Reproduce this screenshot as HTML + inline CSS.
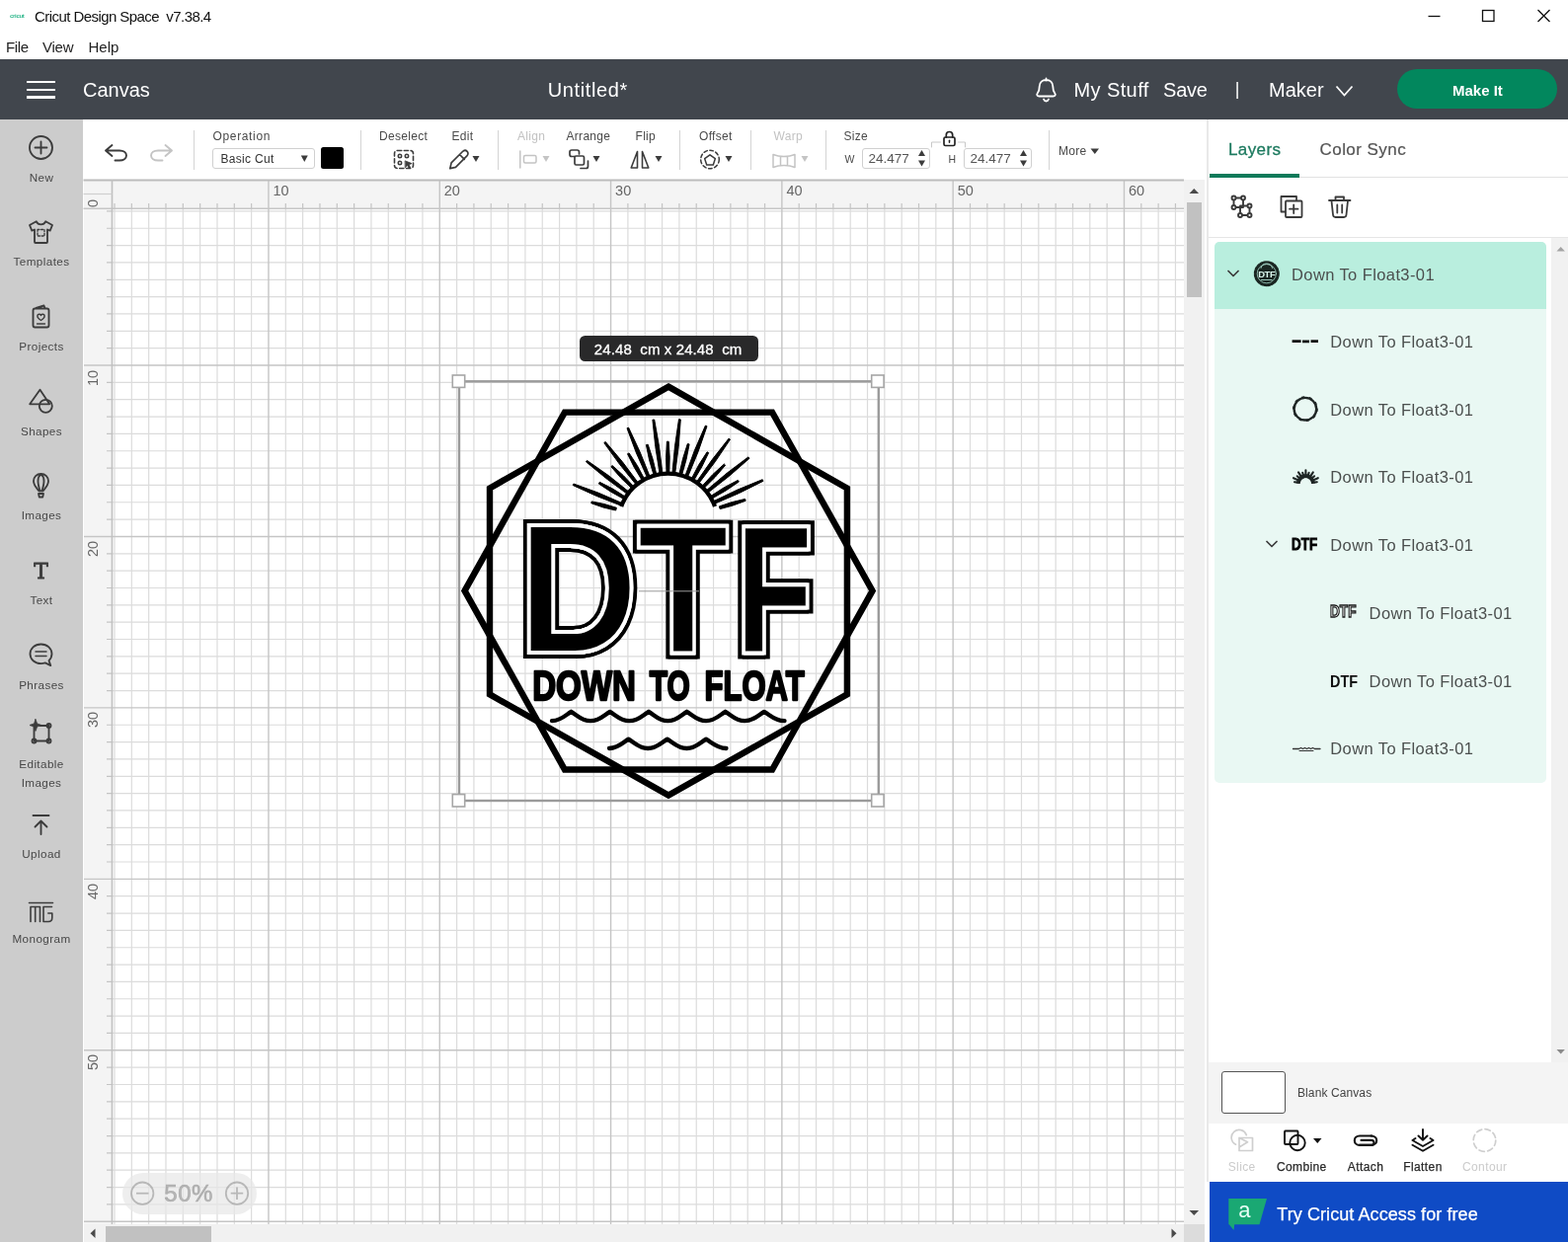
<!DOCTYPE html>
<html lang="en"><head><meta charset="utf-8"><title>Cricut Design Space</title>
<style>
*{box-sizing:border-box;margin:0;padding:0}
html,body{width:1588px;height:1258px;overflow:hidden;background:#fff}
body{position:relative;font-family:"Liberation Sans",sans-serif;color:#333}
.a{position:absolute}
.t{position:absolute;white-space:nowrap;line-height:1}
svg{position:absolute;overflow:visible}
#app{position:absolute;left:0;top:0;width:1588px;height:1258px;overflow:hidden;will-change:transform}

</style></head>
<body>
<div id="app">
<!-- titlebar -->

<div class="a" style="left:0;top:0;width:1588px;height:60px;background:#fff"></div>
<div class="t" style="left:10px;top:13px;font-size:6px;font-weight:bold;color:#2bb68a;letter-spacing:-0.3px">cricut</div>
<div class="t" style="left:35px;top:9px;font-size:15px;letter-spacing:-.56px;color:#111">Cricut Design Space&nbsp; v7.38.4</div>
<div class="t" style="left:6px;top:39.800px;font-size:15px;letter-spacing:-.4px;color:#222">File</div>
<div class="t" style="left:43px;top:39.800px;font-size:15px;letter-spacing:-.25px;color:#222">View</div>
<div class="t" style="left:89.500px;top:39.800px;font-size:15px;color:#222">Help</div>
<svg style="left:1440px;top:4px" width="140" height="26" viewBox="1440 4 140 26" fill="none" stroke="#111" stroke-width="1.3">
<path d="M1446.5 16.5h12"/>
<rect x="1501.5" y="10.5" width="11.5" height="11"/>
<path d="M1557.5 10l12 12M1569.5 10l-12 12"/>
</svg>

<!-- header -->

<div class="a" style="left:0;top:60px;width:1588px;height:60.5px;background:#41464d"></div>
<div class="a" style="left:27px;top:82.300px;width:29px;height:2.2px;background:#fff"></div>
<div class="a" style="left:27px;top:89.900px;width:29px;height:2.2px;background:#fff"></div>
<div class="a" style="left:27px;top:97.400px;width:29px;height:2.2px;background:#fff"></div>
<div class="t" style="left:84px;top:80.800px;font-size:20px;color:#fff">Canvas</div>
<div class="t" style="left:554.800px;top:80.800px;font-size:20px;letter-spacing:.62px;color:#fff">Untitled*</div>
<svg style="left:1046px;top:76px" width="28" height="30" viewBox="1046 76 28 30" fill="none" stroke="#fff" stroke-width="1.8" stroke-linejoin="round" stroke-linecap="round">
<path d="M1059.5 79.5v2M1052.5 97.5h14c2 0 3-1.5 1.8-3-1.6-2-2-4-2-7 0-4-3-6.500-6.800-6.500s-6.800 2.500-6.800 6.500c0 3-.4 5-2 7-1.200 1.500-.2 3 1.800 3zM1057 100.500c.5 1.300 1.400 2 2.500 2s2-.7 2.500-2"/>
</svg>
<div class="t" style="left:1087.500px;top:80.800px;font-size:20px;letter-spacing:.4px;color:#fff">My Stuff</div>
<div class="t" style="left:1178px;top:80.800px;font-size:20px;letter-spacing:-.2px;color:#fff">Save</div>
<div class="t" style="left:1250.800px;top:81.300px;font-size:18px;color:#fff">|</div>
<div class="t" style="left:1285px;top:80.800px;font-size:20px;color:#fff">Maker</div>
<svg style="left:1350px;top:84px" width="24" height="18" viewBox="1350 84 24 18" fill="none" stroke="#fff" stroke-width="1.8"><path d="M1353.500 87.500l8 9 8-9"/></svg>
<div class="a" style="left:1414.800px;top:70.200px;width:162.400px;height:40.300px;border-radius:20.200px;background:#02875d"></div>
<div class="t" style="left:1471px;top:83.500px;font-size:15px;font-weight:bold;color:#fff">Make It</div>

<!-- sidebar -->
<div class="a" style="left:0;top:120.500px;width:84px;height:1137.500px;background:#cccccc"></div>
<style>.sl{font-size:11.700px;color:#484848;text-align:center;letter-spacing:.4px}</style>
<svg style="left:0;top:120px" width="84" height="860" viewBox="0 120 84 860" fill="none" stroke="#3c3c3c" stroke-width="1.850" stroke-linecap="round" stroke-linejoin="round">
<circle cx="41.500" cy="149.500" r="11.500"/><path d="M41.500 143.500v12M35.500 149.500h12"/>
<path d="M36.800 224.300l-6.800 3.700 2.300 5.600 2.700-1.100v12.500c0 .6.400 1 1 1h11c.6 0 1-.4 1-1v-12.500l2.700 1.100 2.300-5.600-6.800-3.700c-.9 2-2.600 3-4.700 3s-3.800-1-4.700-3z"/><path d="M38 232.500h7v6.500h-7z" stroke-dasharray="2 1.600" stroke-width="1.300"/>
<path d="M33.500 314.500c0-1.100.9-2 2-2h12c1.100 0 2 .9 2 2v15c0 1.100-.9 2-2 2h-12c-1.100 0-2-.9-2-2zM36.500 312l8-2.500 1 2.500"/><path d="M41.500 324.500c-2.200-1.500-3.600-2.800-3.600-4.300 0-1.100.8-1.900 1.800-1.900.8 0 1.400.4 1.800 1.100.4-.7 1-1.100 1.800-1.100 1 0 1.800.8 1.800 1.900 0 1.500-1.400 2.800-3.600 4.300z" stroke-width="1.400"/><path d="M37.500 328h8" stroke-width="1.300"/>
<path d="M40.500 394.800l9.700 14.500h-20z"/><circle cx="46.300" cy="411.300" r="6.500"/>
<path d="M41.500 480c4.500 0 7.500 3.300 7.500 7.300 0 4.200-3.200 7.200-5.500 10h-4c-2.300-2.800-5.500-5.800-5.500-10 0-4 3-7.300 7.500-7.300z"/><path d="M41.500 480c-2 1.700-3 4.200-3 7.300s1 6.800 2 10M41.500 480c2 1.700 3 4.200 3 7.300s-1 6.800-2 10M39 500h5l-.8 3.500h-3.400z"/>
<text x="41.600" y="586" text-anchor="middle" font-family="DejaVu Serif, Liberation Serif, serif" font-size="21.800" fill="#3c3c3c" stroke="#3c3c3c" stroke-width=".9">T</text>
<path d="M41.500 652.500c6.400 0 11 4.300 11 9.800 0 2.700-1.100 5-3 6.800l1.800 5-5.500-2.700c-1.300.4-2.800.7-4.300.7-6.400 0-11-4.300-11-9.800s4.600-9.800 11-9.800z"/><path d="M36 660h11M36 664.500h11" stroke-width="1.500"/>
<path d="M34.500 735v15.500h15v-15.500h-9"/><circle cx="34.500" cy="750.500" r="2"/><circle cx="49.500" cy="750.500" r="2"/><circle cx="49.500" cy="735" r="2"/><path d="M36 728.500l1.600 4.400 4.400 1.600-4.400 1.600-1.600 4.400-1.600-4.400-4.400-1.600 4.400-1.600z" fill="#3c3c3c" stroke-width=".8"/>
<path d="M33.500 826h16M41.500 845v-13.500M35.500 837.500l6-6 6 6"/>
<path d="M29.500 914.500h24M31 918.500v15M31 918.500h9.500v15M35.700 918.500v15M44 918.500h8.500M44 918.500v15h5c2.500 0 3.800-1.600 3.800-4v-4.500h-4" stroke-width="1.600"/>
</svg>
<div class="t sl" style="left:0;width:84px;top:173.8px">New</div>
<div class="t sl" style="left:0;width:84px;top:259.2px">Templates</div>
<div class="t sl" style="left:0;width:84px;top:344.8px">Projects</div>
<div class="t sl" style="left:0;width:84px;top:430.8px">Shapes</div>
<div class="t sl" style="left:0;width:84px;top:516.4px">Images</div>
<div class="t sl" style="left:0;width:84px;top:602.0px">Text</div>
<div class="t sl" style="left:0;width:84px;top:687.5px">Phrases</div>
<div class="t sl" style="left:0;width:84px;top:768.2px">Editable</div>
<div class="t sl" style="left:0;width:84px;top:786.8px">Images</div>
<div class="t sl" style="left:0;width:84px;top:858.8px">Upload</div>
<div class="t sl" style="left:0;width:84px;top:944.8px">Monogram</div>
<!-- toolbar -->
<style>.tl{font-size:12px;color:#4a4a4a;letter-spacing:.3px}.tl.dis{color:#c2c2c2}.sep{position:absolute;top:131.5px;width:1px;height:40px;background:#d4d4d4}.inp{position:absolute;border:1px solid #d0d0d0;border-radius:3px;background:#fff}</style>
<div class="a" style="left:84.500px;top:120.500px;width:1138px;height:61px;background:#fff"></div>
<div class="sep" style="left:196.0px"></div>
<div class="sep" style="left:365.0px"></div>
<div class="sep" style="left:503.5px"></div>
<div class="sep" style="left:688.0px"></div>
<div class="sep" style="left:760.0px"></div>
<div class="sep" style="left:836.0px"></div>
<div class="sep" style="left:1062.0px"></div>
<div class="t tl"  style="letter-spacing:.65px;left:215.5px;top:131.7px">Operation</div>
<div class="t tl " style="left:384.0px;top:131.7px">Deselect</div>
<div class="t tl " style="left:457.5px;top:131.7px">Edit</div>
<div class="t tl dis" style="left:524.0px;top:131.7px">Align</div>
<div class="t tl " style="left:573.5px;top:131.7px">Arrange</div>
<div class="t tl " style="left:643.5px;top:131.7px">Flip</div>
<div class="t tl " style="left:708.0px;top:131.7px">Offset</div>
<div class="t tl dis" style="left:783.5px;top:131.7px">Warp</div>
<div class="t tl " style="left:854.5px;top:131.7px">Size</div>
<div class="t tl " style="left:1072.0px;top:146.5px">More</div>
<div class="t" style="left:855.5px;top:156px;font-size:10.5px;color:#4a4a4a">W</div>
<div class="t" style="left:960.5px;top:156px;font-size:10.5px;color:#4a4a4a">H</div>
<div class="inp" style="left:215.200px;top:149.600px;width:103.800px;height:21.200px"></div>
<div class="t" style="left:223.500px;top:154.500px;font-size:12px;color:#333;letter-spacing:.3px">Basic Cut</div>
<div class="a" style="left:325.200px;top:149px;width:22.500px;height:22.400px;border-radius:2.500px;background:#000"></div>
<div class="inp" style="left:873px;top:150px;width:68.500px;height:21px"></div>
<div class="inp" style="left:976px;top:150px;width:68.500px;height:21px"></div>
<div class="t" style="left:879.500px;top:154.200px;font-size:13.500px;color:#555">24.477</div>
<div class="t" style="left:982.500px;top:154.200px;font-size:13.500px;color:#555">24.477</div>
<svg style="left:84px;top:120px" width="1140" height="62" viewBox="84 120 1140 62" fill="none" stroke-linecap="round" stroke-linejoin="round">
<g stroke="#3c3c3c" stroke-width="1.900"><path d="M113.500 147l-6.500 5.500 6.500 5.500M107.500 152.500h13.500c4 0 7 2 7 5s-3 5-7 5h-4.500"/></g>
<g stroke="#c4c4c4" stroke-width="1.900"><path d="M167.500 147l6.500 5.500-6.500 5.500M173.500 152.500h-13.500c-4 0-7 2-7 5s3 5 7 5h4.500"/></g>
<path d="M304.8 157.5h7.0l-3.5 6.5z" fill="#3c3c3c" stroke="none"/>
<path d="M478.5 158.0h7.0l-3.5 6.0z" fill="#3c3c3c" stroke="none"/>
<path d="M549.5 158.0h7.0l-3.5 6.0z" fill="#c4c4c4" stroke="none"/>
<path d="M600.5 158.0h7.0l-3.5 6.0z" fill="#3c3c3c" stroke="none"/>
<path d="M663.5 158.0h7.0l-3.5 6.0z" fill="#3c3c3c" stroke="none"/>
<path d="M734.5 158.0h7.0l-3.5 6.0z" fill="#3c3c3c" stroke="none"/>
<path d="M811.5 158.0h7.0l-3.5 6.0z" fill="#c4c4c4" stroke="none"/>
<path d="M1104.5 150.5h8.5l-4.2 5.5z" fill="#3c3c3c" stroke="none"/>
<path d="M930.0 158l3.500 -6 3.500 6z" fill="#3c3c3c"/>
<path d="M930.0 162.500l3.500 6 3.500 -6z" fill="#3c3c3c"/>
<path d="M1033.0 158l3.500 -6 3.500 6z" fill="#3c3c3c"/>
<path d="M1033.0 162.500l3.500 6 3.500 -6z" fill="#3c3c3c"/>
<g stroke="#3c3c3c" stroke-width="1.600"><rect x="399.500" y="152.500" width="19" height="18" rx="3" stroke-dasharray="4.200 2.600"/><circle cx="405" cy="158" r="1.700"/><circle cx="412" cy="158" r="1.700"/><circle cx="405" cy="165" r="1.700"/><path d="M410.500 163l6.500 2.600-2.800 1.200 1.500 3-1.500.7-1.500-3-2.200 2z" fill="#3c3c3c" stroke-width=".8"/></g>
<g stroke="#3c3c3c" stroke-width="1.700"><path d="M468.500 153.500c1.400-1.400 3.400-1.400 4.600-.2 1.200 1.200 1.200 3.200-.2 4.600l-11.400 11.400-5.700 1.400 1.300-5.800zM465.500 156.500l4.800 4.800"/></g>
<g stroke="#c4c4c4" stroke-width="1.500"><path d="M526.800 153v17"/><rect x="530.500" y="157.500" width="12.500" height="7.500" rx="1.500"/></g>
<g stroke="#3c3c3c" stroke-width="1.700"><path d="M582 158.500h-3c-1.100 0-2-.9-2-2v-2.500c0-1.100.9-2 2-2h5.500c1.100 0 2 .9 2 2v2"/><rect x="582" y="158" width="9.500" height="9" rx="1.500"/><path d="M588 170.500h5.500c1.100 0 2-.9 2-2v-5.500"/></g>
<g stroke="#3c3c3c" stroke-width="1.600"><path d="M645.500 153.500v16.500h-6.300zM650.500 153.500v16.500h6.300z"/></g>
<g stroke="#3c3c3c" stroke-width="1.500"><path d="M719 156.800l5.300 3.900-2 6.300h-6.600l-2-6.300z"/><circle cx="719" cy="161.500" r="9.300" stroke-dasharray="3.600 2.600"/></g>
<g stroke="#c4c4c4" stroke-width="1.500"><path d="M783 156.500c3.500 1.500 7.500 2 11 2s7.500-.5 11-2v13c-3.500-1.500-7.500-2-11-2s-7.500.5-11 2zM790.500 158.200v9.600M797.500 158.200v9.600"/></g>
<g stroke="#222" stroke-width="1.700"><rect x="956" y="139" width="11" height="8.500" rx="1.500"/><path d="M958.300 139v-2.300c0-1.900 1.300-3.200 3.200-3.200s3.200 1.300 3.200 3.200v2.300"/><path d="M961.500 142.300v2" stroke-width="1.500"/></g>
<path d="M943.500 149v-5h9M970.500 144h7v5" stroke="#c8c8c8" stroke-width="1"/>
</svg>
<!-- canvas -->
<div class="a" style="left:84.500px;top:181.500px;width:1114.500px;height:1058.500px;background:#fff"></div>
<div class="a" style="left:84.500px;top:181.500px;width:1114.500px;height:30px;background:#f4f4f4"></div>
<div class="a" style="left:84.500px;top:181.500px;width:29px;height:1058.500px;background:#f4f4f4"></div>
<svg style="left:0;top:0" width="1588" height="1258" viewBox="0 0 1588 1258" fill="none">
<path d="M116.00 211.5V1240.0M133.33 211.5V1240.0M150.66 211.5V1240.0M167.99 211.5V1240.0M185.32 211.5V1240.0M202.65 211.5V1240.0M219.98 211.5V1240.0M237.31 211.5V1240.0M254.64 211.5V1240.0M289.30 211.5V1240.0M306.63 211.5V1240.0M323.96 211.5V1240.0M341.29 211.5V1240.0M358.62 211.5V1240.0M375.95 211.5V1240.0M393.28 211.5V1240.0M410.61 211.5V1240.0M427.94 211.5V1240.0M462.60 211.5V1240.0M479.93 211.5V1240.0M497.26 211.5V1240.0M514.59 211.5V1240.0M531.92 211.5V1240.0M549.25 211.5V1240.0M566.58 211.5V1240.0M583.91 211.5V1240.0M601.24 211.5V1240.0M635.90 211.5V1240.0M653.23 211.5V1240.0M670.56 211.5V1240.0M687.89 211.5V1240.0M705.22 211.5V1240.0M722.55 211.5V1240.0M739.88 211.5V1240.0M757.21 211.5V1240.0M774.54 211.5V1240.0M809.20 211.5V1240.0M826.53 211.5V1240.0M843.86 211.5V1240.0M861.19 211.5V1240.0M878.52 211.5V1240.0M895.85 211.5V1240.0M913.18 211.5V1240.0M930.51 211.5V1240.0M947.84 211.5V1240.0M982.50 211.5V1240.0M999.83 211.5V1240.0M1017.16 211.5V1240.0M1034.49 211.5V1240.0M1051.82 211.5V1240.0M1069.15 211.5V1240.0M1086.48 211.5V1240.0M1103.81 211.5V1240.0M1121.14 211.5V1240.0M1155.80 211.5V1240.0M1173.13 211.5V1240.0M1190.46 211.5V1240.0M113.5 213.90H1199.0M113.5 231.25H1199.0M113.5 248.59H1199.0M113.5 265.94H1199.0M113.5 283.28H1199.0M113.5 300.62H1199.0M113.5 317.97H1199.0M113.5 335.31H1199.0M113.5 352.66H1199.0M113.5 387.35H1199.0M113.5 404.69H1199.0M113.5 422.04H1199.0M113.5 439.38H1199.0M113.5 456.73H1199.0M113.5 474.07H1199.0M113.5 491.42H1199.0M113.5 508.76H1199.0M113.5 526.11H1199.0M113.5 560.80H1199.0M113.5 578.14H1199.0M113.5 595.49H1199.0M113.5 612.83H1199.0M113.5 630.18H1199.0M113.5 647.52H1199.0M113.5 664.87H1199.0M113.5 682.21H1199.0M113.5 699.56H1199.0M113.5 734.25H1199.0M113.5 751.59H1199.0M113.5 768.94H1199.0M113.5 786.28H1199.0M113.5 803.63H1199.0M113.5 820.97H1199.0M113.5 838.32H1199.0M113.5 855.66H1199.0M113.5 873.01H1199.0M113.5 907.70H1199.0M113.5 925.04H1199.0M113.5 942.39H1199.0M113.5 959.73H1199.0M113.5 977.08H1199.0M113.5 994.42H1199.0M113.5 1011.77H1199.0M113.5 1029.12H1199.0M113.5 1046.46H1199.0M113.5 1081.15H1199.0M113.5 1098.49H1199.0M113.5 1115.84H1199.0M113.5 1133.18H1199.0M113.5 1150.53H1199.0M113.5 1167.88H1199.0M113.5 1185.22H1199.0M113.5 1202.57H1199.0M113.5 1219.91H1199.0" stroke="#dcdcdc" stroke-width="1.200"/>
<path d="M116.00 206V211M133.33 206V211M150.66 206V211M167.99 206V211M185.32 206V211M202.65 206V211M219.98 206V211M237.31 206V211M254.64 206V211M289.30 206V211M306.63 206V211M323.96 206V211M341.29 206V211M358.62 206V211M375.95 206V211M393.28 206V211M410.61 206V211M427.94 206V211M462.60 206V211M479.93 206V211M497.26 206V211M514.59 206V211M531.92 206V211M549.25 206V211M566.58 206V211M583.91 206V211M601.24 206V211M635.90 206V211M653.23 206V211M670.56 206V211M687.89 206V211M705.22 206V211M722.55 206V211M739.88 206V211M757.21 206V211M774.54 206V211M809.20 206V211M826.53 206V211M843.86 206V211M861.19 206V211M878.52 206V211M895.85 206V211M913.18 206V211M930.51 206V211M947.84 206V211M982.50 206V211M999.83 206V211M1017.16 206V211M1034.49 206V211M1051.82 206V211M1069.15 206V211M1086.48 206V211M1103.81 206V211M1121.14 206V211M1155.80 206V211M1173.13 206V211M1190.46 206V211M108 213.90H113.500M108 231.25H113.500M108 248.59H113.500M108 265.94H113.500M108 283.28H113.500M108 300.62H113.500M108 317.97H113.500M108 335.31H113.500M108 352.66H113.500M108 387.35H113.500M108 404.69H113.500M108 422.04H113.500M108 439.38H113.500M108 456.73H113.500M108 474.07H113.500M108 491.42H113.500M108 508.76H113.500M108 526.11H113.500M108 560.80H113.500M108 578.14H113.500M108 595.49H113.500M108 612.83H113.500M108 630.18H113.500M108 647.52H113.500M108 664.87H113.500M108 682.21H113.500M108 699.56H113.500M108 734.25H113.500M108 751.59H113.500M108 768.94H113.500M108 786.28H113.500M108 803.63H113.500M108 820.97H113.500M108 838.32H113.500M108 855.66H113.500M108 873.01H113.500M108 907.70H113.500M108 925.04H113.500M108 942.39H113.500M108 959.73H113.500M108 977.08H113.500M108 994.42H113.500M108 1011.77H113.500M108 1029.12H113.500M108 1046.46H113.500M108 1081.15H113.500M108 1098.49H113.500M108 1115.84H113.500M108 1133.18H113.500M108 1150.53H113.500M108 1167.88H113.500M108 1185.22H113.500M108 1202.57H113.500M108 1219.91H113.500" stroke="#c4c4c4" stroke-width="1.200"/>
<path d="M271.97 182V1240.0M445.27 182V1240.0M618.57 182V1240.0M791.87 182V1240.0M965.17 182V1240.0M1138.47 182V1240.0M85 370.00H1199.0M85 543.45H1199.0M85 716.90H1199.0M85 890.35H1199.0M85 1063.81H1199.0M85 1237.25H1199.0" stroke="#c5c5c5" stroke-width="1.400"/>
<path d="M84.500 182.400H1199" stroke="#bcbcbc" stroke-width="2"/>
<path d="M84.500 211.200H1199" stroke="#c6c6c6" stroke-width="1.600"/>
<path d="M113.500 182V1240" stroke="#c0c0c0" stroke-width="1.600"/>
<path d="M84.500 196.500H113.500" stroke="#cfcfcf" stroke-width="1.200"/>
</svg>
<style>.rl{font-size:14.500px;color:#666}.rv{position:absolute;white-space:nowrap;line-height:1;font-size:14.500px;color:#666;transform-origin:0 0;transform:rotate(-90deg)}</style>
<div class="t rl" style="left:276.5px;top:185.500px">10</div>
<div class="t rl" style="left:449.8px;top:185.500px">20</div>
<div class="t rl" style="left:623.1px;top:185.500px">30</div>
<div class="t rl" style="left:796.4px;top:185.500px">40</div>
<div class="t rl" style="left:969.7px;top:185.500px">50</div>
<div class="t rl" style="left:1143.0px;top:185.500px">60</div>
<div class="rv" style="left:86.500px;top:390.5px">10</div>
<div class="rv" style="left:86.500px;top:564.0px">20</div>
<div class="rv" style="left:86.500px;top:737.4px">30</div>
<div class="rv" style="left:86.500px;top:910.9px">40</div>
<div class="rv" style="left:86.500px;top:1084.3px">50</div>
<div class="rv" style="left:86.500px;top:209.500px">0</div>
<div class="a" style="left:124px;top:1188px;width:136px;height:41.500px;border-radius:21px;background:rgba(232,232,232,.72)"></div>
<svg style="left:124px;top:1188px" width="136" height="42" viewBox="124 1188 136 42" fill="none" stroke="rgba(140,140,140,.55)" stroke-width="1.800"><circle cx="144.200" cy="1208.700" r="11.200"/><path d="M138 1208.700h12.500"/><circle cx="240" cy="1208.700" r="11.200"/><path d="M233.700 1208.700h12.500M240 1202.500v12.500"/></svg>
<div class="t" style="left:166.300px;top:1196.600px;font-size:24px;color:rgba(150,150,150,.62);letter-spacing:.5px;-webkit-text-stroke:.7px rgba(150,150,150,.62)">50%</div>
<div class="a" style="left:1199px;top:181.500px;width:21px;height:1058.500px;background:#f1f1f1"></div>
<div class="a" style="left:1201.500px;top:204.500px;width:15.500px;height:96px;background:#c1c1c1"></div>
<div class="a" style="left:84.500px;top:1240px;width:1114.500px;height:18px;background:#f1f1f1"></div>
<div class="a" style="left:106.500px;top:1242px;width:107px;height:16px;background:#c1c1c1"></div>
<div class="a" style="left:1199px;top:1240px;width:21px;height:18px;background:#dcdcdc"></div>
<svg style="left:0;top:0" width="1588" height="1258" viewBox="0 0 1588 1258" fill="#4a4a4a"><path d="M1204.500 196l4.800 -5 4.800 5z"/><path d="M1204.500 1226l4.800 5 4.800 -5z"/><path d="M96.500 1244.500l-5 4.800 5 4.800z"/><path d="M1186.500 1244.500l5 4.800 -5 4.800z"/></svg>
<!-- design -->
<svg style="left:0;top:0" width="1588" height="1258" viewBox="0 0 1588 1258" fill="none">
<rect x="465" y="386.300" width="424.800" height="424.700" stroke="#9b9b9b" stroke-width="2.400"/>
<polygon points="677.0,391.6 857.9,494.5 857.9,703.4 677.0,805.6 496.0,703.4 496.0,494.5" stroke="#000" stroke-width="6.400" stroke-linejoin="miter"/>
<polygon points="470.6,598.4 571.9,417.6 782.1,417.6 883.6,598.4 782.1,779.5 571.9,779.5" stroke="#000" stroke-width="6.400" stroke-linejoin="miter"/>
<path d="M629.2 512.9A50.4 50.4 0 0 1 724.0 512.9" stroke="#000" stroke-width="4.300"/>
<path d="M629.9 509.5L605.7 499.0L580.9 490.0L580.3 491.6L604.3 502.5L628.9 512.1ZM636.9 498.1L616.2 481.6L594.5 466.4L593.5 467.8L613.9 484.6L635.2 500.3ZM646.3 489.0L630.4 467.8L613.2 447.4L611.8 448.6L627.4 470.1L644.1 490.8ZM658.1 482.6L648.0 457.5L636.6 433.1L635.0 433.7L644.5 459.0L655.5 483.7ZM670.9 479.4L667.5 452.1L662.7 425.0L660.9 425.2L663.8 452.6L668.1 479.8ZM683.7 479.6L687.2 452.3L689.3 424.9L687.5 424.7L683.5 451.9L680.9 479.3ZM696.5 483.1L707.0 457.7L716.0 431.7L714.4 431.1L703.4 456.3L693.9 482.1ZM707.7 489.7L724.2 467.8L739.5 445.1L738.1 444.1L721.2 465.6L705.5 488.0ZM717.1 499.0L738.5 482.2L759.0 464.3L757.8 462.9L736.1 479.3L715.3 496.8ZM723.6 510.3L748.6 499.5L773.0 487.3L772.2 485.7L747.0 496.0L722.5 507.7ZM624.4 514.3L612.0 510.5L599.2 507.9L598.8 509.7L611.0 514.0L623.7 517.0ZM633.3 503.1L620.6 495.1L607.3 488.3L606.3 489.9L618.8 498.2L631.9 505.5ZM641.8 492.8L631.4 481.7L620.1 471.5L618.9 472.7L628.9 484.2L639.8 494.7ZM652.6 485.1L645.4 471.6L637.1 458.9L635.5 459.7L642.3 473.4L650.2 486.5ZM664.8 480.5L661.1 465.1L656.2 450.2L654.4 450.6L657.6 466.1L662.1 481.2ZM677.8 479.1L678.2 463.1L677.2 447.2L675.4 447.2L674.6 463.2L675.0 479.1ZM690.6 481.0L695.0 465.6L698.1 449.9L696.3 449.5L691.5 464.8L687.9 480.3ZM702.8 486.3L710.8 472.8L717.7 458.6L716.1 457.8L707.6 471.0L700.3 484.9ZM713.0 494.4L724.3 483.2L734.6 471.2L733.4 470.0L721.7 480.7L711.0 492.4ZM721.0 505.0L735.0 497.0L748.3 488.0L747.3 486.4L733.1 493.9L719.6 502.6ZM729.2 515.6L742.3 512.0L755.2 507.2L754.6 505.4L741.3 508.6L728.3 512.9Z" fill="#000" stroke="#000" stroke-width="1" stroke-linejoin="round"/>
<path d="M559.0 730.2C568.7 729.7 572.6 724.3 578.4 720.8C584.3 724.3 589.2 730.2 598.0 730.2C606.9 730.2 611.8 724.3 617.7 720.8C623.6 724.3 628.5 730.2 637.4 730.2C646.2 730.2 651.1 724.3 657.0 720.8C662.8 724.3 667.6 730.2 676.3 730.2C685.0 730.2 689.8 724.3 695.6 720.8C701.5 724.3 706.3 730.2 715.1 730.2C723.9 730.2 728.8 724.3 734.6 720.8C740.5 724.3 745.4 730.2 754.2 730.2C763.1 730.2 768.0 724.3 773.9 720.8C780.1 724.3 784.2 729.7 794.5 730.2" stroke="#000" stroke-width="4.300" stroke-linejoin="round" stroke-linecap="round"/>
<path d="M617.0 758.0C626.8 757.5 630.6 752.1 636.5 748.6C642.4 752.1 647.3 758.0 656.1 758.0C665.0 758.0 669.9 752.1 675.8 748.6C681.7 752.1 686.6 758.0 695.5 758.0C704.3 758.0 709.2 752.1 715.1 748.6C721.2 752.1 725.3 757.5 735.5 758.0" stroke="#000" stroke-width="4.300" stroke-linejoin="round" stroke-linecap="round"/>
<text x="0" y="0" transform="translate(523.90 661.20) scale(0.9055 1)" font-family="Liberation Sans, sans-serif" font-weight="bold" font-size="186.63" fill="#000" stroke="#000" stroke-width="12.00" stroke-linejoin="miter" stroke-miterlimit="4">D</text>
<text x="0" y="0" transform="translate(525.03 661.20) scale(0.9055 1)" font-family="Liberation Sans, sans-serif" font-weight="bold" font-size="186.63" fill="#000" stroke="#000" stroke-width="12.00" stroke-linejoin="miter" stroke-miterlimit="4">D</text>
<text x="0" y="0" transform="translate(524.28 661.20) scale(0.9055 1)" font-family="Liberation Sans, sans-serif" font-weight="bold" font-size="186.63" fill="#fff" stroke="#fff" stroke-width="4.00" stroke-linejoin="miter" stroke-miterlimit="4">D</text>
<text x="0" y="0" transform="translate(524.66 661.20) scale(0.9055 1)" font-family="Liberation Sans, sans-serif" font-weight="bold" font-size="186.63" fill="#fff" stroke="#fff" stroke-width="4.00" stroke-linejoin="miter" stroke-miterlimit="4">D</text>
<text x="0" y="0" transform="translate(524.47 661.20) scale(0.9055 1)" font-family="Liberation Sans, sans-serif" font-weight="bold" font-size="186.63" fill="#000" stroke="#fff" stroke-width="4.00" stroke-linejoin="miter" stroke-miterlimit="4">D</text>
<text x="0" y="0" transform="translate(644.41 660.70) scale(0.8122 1)" font-family="Liberation Sans, sans-serif" font-weight="bold" font-size="185.17" fill="#000" stroke="#000" stroke-width="13.00" stroke-linejoin="miter" stroke-miterlimit="4">T</text>
<text x="0" y="0" transform="translate(646.85 660.70) scale(0.8122 1)" font-family="Liberation Sans, sans-serif" font-weight="bold" font-size="185.17" fill="#000" stroke="#000" stroke-width="13.00" stroke-linejoin="miter" stroke-miterlimit="4">T</text>
<text x="0" y="0" transform="translate(645.16 660.70) scale(0.8122 1)" font-family="Liberation Sans, sans-serif" font-weight="bold" font-size="185.17" fill="#fff" stroke="#fff" stroke-width="5.00" stroke-linejoin="miter" stroke-miterlimit="4">T</text>
<text x="0" y="0" transform="translate(646.10 660.70) scale(0.8122 1)" font-family="Liberation Sans, sans-serif" font-weight="bold" font-size="185.17" fill="#fff" stroke="#fff" stroke-width="5.00" stroke-linejoin="miter" stroke-miterlimit="4">T</text>
<text x="0" y="0" transform="translate(645.63 660.70) scale(0.8122 1)" font-family="Liberation Sans, sans-serif" font-weight="bold" font-size="185.17" fill="#000" stroke="#fff" stroke-width="3.00" stroke-linejoin="miter" stroke-miterlimit="4">T</text>
<text x="0" y="0" transform="translate(743.90 659.80) scale(0.6811 1)" font-family="Liberation Sans, sans-serif" font-weight="bold" font-size="182.56" fill="#000" stroke="#000" stroke-width="14.80" stroke-linejoin="miter" stroke-miterlimit="4">F</text>
<text x="0" y="0" transform="translate(748.62 659.80) scale(0.6811 1)" font-family="Liberation Sans, sans-serif" font-weight="bold" font-size="182.56" fill="#000" stroke="#000" stroke-width="14.80" stroke-linejoin="miter" stroke-miterlimit="4">F</text>
<text x="0" y="0" transform="translate(745.18 659.80) scale(0.6811 1)" font-family="Liberation Sans, sans-serif" font-weight="bold" font-size="182.56" fill="#fff" stroke="#fff" stroke-width="6.80" stroke-linejoin="miter" stroke-miterlimit="4">F</text>
<text x="0" y="0" transform="translate(747.34 659.80) scale(0.6811 1)" font-family="Liberation Sans, sans-serif" font-weight="bold" font-size="182.56" fill="#fff" stroke="#fff" stroke-width="6.80" stroke-linejoin="miter" stroke-miterlimit="4">F</text>
<text x="0" y="0" transform="translate(746.26 659.80) scale(0.6811 1)" font-family="Liberation Sans, sans-serif" font-weight="bold" font-size="182.56" fill="#000" stroke="#fff" stroke-width="1.20" stroke-linejoin="miter" stroke-miterlimit="4">F</text>
<text x="0" y="0" transform="translate(539.13 709.300) scale(0.7746 1)" font-family="Liberation Sans, sans-serif" font-weight="bold" font-size="42.73" fill="#000" stroke="#000" stroke-width="2.3" stroke-linejoin="round">DOWN</text>
<text x="0" y="0" transform="translate(657.82 709.300) scale(0.6996 1)" font-family="Liberation Sans, sans-serif" font-weight="bold" font-size="42.73" fill="#000" stroke="#000" stroke-width="2.3" stroke-linejoin="round">TO</text>
<text x="0" y="0" transform="translate(713.57 709.300) scale(0.7265 1)" font-family="Liberation Sans, sans-serif" font-weight="bold" font-size="42.73" fill="#000" stroke="#000" stroke-width="2.3" stroke-linejoin="round">FLOAT</text>
<path d="M647 598.800H708" stroke="#9a9a9a" stroke-width="1"/>
<rect x="458.3" y="380.0" width="12.400" height="12.400" fill="#fff" stroke="#a6a6a6" stroke-width="1.600"/>
<rect x="882.7" y="380.0" width="12.400" height="12.400" fill="#fff" stroke="#a6a6a6" stroke-width="1.600"/>
<rect x="458.3" y="804.6" width="12.400" height="12.400" fill="#fff" stroke="#a6a6a6" stroke-width="1.600"/>
<rect x="882.7" y="804.6" width="12.400" height="12.400" fill="#fff" stroke="#a6a6a6" stroke-width="1.600"/>
</svg>
<div class="a" style="left:586.800px;top:340.300px;width:180.800px;height:26px;border-radius:5.500px;background:#29292a"></div>
<div class="t" style="left:601.800px;top:346px;font-size:15px;color:#fff;letter-spacing:.1px;-webkit-text-stroke:.3px #fff">24.48&nbsp; cm x 24.48&nbsp; cm</div>
<!-- panel -->
<style>.ly{font-size:16.500px;color:#4b4f4e;letter-spacing:.4px}.al{font-size:12px;color:#2a2a2a;letter-spacing:.4px;-webkit-text-stroke:.25px #2a2a2a}.al.dis{color:#cbcbcb;-webkit-text-stroke:0}</style>
<div class="a" style="left:1220px;top:120.500px;width:368px;height:1137.500px;background:#fff"></div>
<div class="a" style="left:1222px;top:120.500px;width:2px;height:1076.500px;background:#e9e9e9"></div>
<div class="t" style="left:1244px;top:142.800px;font-size:17px;color:#1d7a5f;letter-spacing:.4px;-webkit-text-stroke:.3px #1d7a5f">Layers</div>
<div class="t" style="left:1336.500px;top:142.800px;font-size:17px;color:#555;letter-spacing:.45px;-webkit-text-stroke:.2px #555">Color Sync</div>
<div class="a" style="left:1224px;top:179px;width:364px;height:1px;background:#e2e2e2"></div>
<div class="a" style="left:1224.500px;top:176.200px;width:91.500px;height:3.600px;background:#0f7a5a"></div>
<div class="a" style="left:1224px;top:240px;width:364px;height:1px;background:#e6e6e6"></div>
<div class="a" style="left:1571px;top:241px;width:17px;height:834.500px;background:#f1f1f1"></div>
<div class="a" style="left:1229.500px;top:245px;width:336.500px;height:548px;border-radius:5px;background:#e9f8f3"></div>
<div class="a" style="left:1229.500px;top:245px;width:336.500px;height:67.800px;border-radius:5px 5px 0 0;background:#b9eede"></div>
<div class="t ly" style="left:1308.0px;top:269.7px">Down To Float3-01</div>
<div class="t ly" style="left:1347.3px;top:338.2px">Down To Float3-01</div>
<div class="t ly" style="left:1347.3px;top:406.7px">Down To Float3-01</div>
<div class="t ly" style="left:1347.3px;top:475.2px">Down To Float3-01</div>
<div class="t ly" style="left:1347.3px;top:543.7px">Down To Float3-01</div>
<div class="t ly" style="left:1386.6px;top:612.7px">Down To Float3-01</div>
<div class="t ly" style="left:1386.6px;top:681.7px">Down To Float3-01</div>
<div class="t ly" style="left:1347.3px;top:750.4px">Down To Float3-01</div>
<div class="t" style="left:1308.300px;top:542.700px;font-size:17px;font-weight:bold;color:#000;-webkit-text-stroke:.9px #000;transform-origin:0 50%;transform:scaleX(.79)">DTF</div>
<div class="t" style="left:1347.300px;top:611.300px;font-size:17px;font-weight:bold;color:#fff;-webkit-text-stroke:1.300px #111;transform-origin:0 50%;transform:scaleX(.8)">DTF</div>
<div class="t" style="left:1347px;top:681.500px;font-size:17px;font-weight:bold;color:#111;transform-origin:0 50%;transform:scaleX(.85)">DTF</div>
<svg style="left:0;top:0" width="1588" height="1258" viewBox="0 0 1588 1258" fill="none" stroke-linecap="round" stroke-linejoin="round">
<g stroke="#3a3a3a" stroke-width="1.900"><rect x="1249.500" y="200.500" width="9.500" height="9.500"/><rect x="1256" y="208.500" width="9.500" height="9.500"/><circle cx="1249.500" cy="200.500" r="2" fill="#fff"/><circle cx="1259" cy="200.500" r="2" fill="#fff"/><circle cx="1249.500" cy="210" r="2" fill="#fff"/><circle cx="1265.500" cy="208.500" r="2" fill="#fff"/><circle cx="1256" cy="218" r="2" fill="#fff"/><circle cx="1265.500" cy="218" r="2" fill="#fff"/></g>
<g stroke="#3a3a3a" stroke-width="1.800"><path d="M1301.500 214.500h-4v-15.500h15.500v4"/><rect x="1302" y="203.500" width="16.500" height="16.500" rx="1"/><path d="M1310.200 207.500v8.500M1306 211.700h8.500"/></g>
<g stroke="#3a3a3a" stroke-width="1.800"><path d="M1346 203h21.500M1352.500 203v-3.500h8.500v3.500M1348.500 203.500l1.500 14c.15 1.400 1 2.500 2.500 2.500h8.500c1.500 0 2.350-1.100 2.500-2.500l1.500-14M1354.300 207.500v8M1359.200 207.500v8"/></g>
<path d="M1244 274.500l5 5 5-5M1283 548.500l5 5 5-5" stroke="#3a3a3a" stroke-width="1.700"/>
<circle cx="1282.800" cy="277.200" r="12.300" fill="#1a2622" stroke="#1a2622" stroke-width="1.400" stroke-dasharray="2.600 1.300"/><circle cx="1282.800" cy="277.200" r="9.600" stroke="#b9eede" stroke-width=".7"/><path d="M1277 271.500a6 6 0 0 1 11.600 0" stroke="#b9eede" stroke-width=".8"/><text x="1282.800" y="280.600" text-anchor="middle" font-family="Liberation Sans, sans-serif" font-weight="bold" font-size="9.500" fill="#d9f5ec" stroke="none" letter-spacing="-.4">DTF</text><path d="M1277.500 283.500h10.600" stroke="#b9eede" stroke-width=".8"/>
<path d="M1308.600 345.600h9M1319 345.800h7M1327.500 345.600h7.500" stroke="#111" stroke-width="2.800" stroke-linecap="butt"/>
<circle cx="1321.900" cy="414.200" r="11.300" stroke="#1e2524" stroke-width="2.300"/><circle cx="1321.900" cy="414.200" r="12.300" stroke="#1e2524" stroke-width="1.200" stroke-dasharray="2.200 5.530"/>
<path d="M1316.0 488.9L1311.0 488.2M1316.5 487.1L1310.0 484.2M1317.5 485.6L1313.7 482.3M1318.9 484.3L1315.0 478.4M1320.6 483.6L1319.2 478.8M1322.4 483.3L1322.4 476.2M1324.2 483.6L1325.6 478.8M1325.9 484.3L1329.8 478.4M1327.3 485.6L1331.1 482.3M1328.3 487.1L1334.8 484.2M1328.8 488.9L1333.8 488.2" stroke="#1e2524" stroke-width="2.100"/><path d="M1314.600 489.600a7.800 7.800 0 0 1 15.600 0" stroke="#1e2524" stroke-width="3.400" stroke-linecap="butt"/>
<path d="M1309.500 758.500h6l2-1 2 1 2-1 2 1 2-1 2 1 2-1 2 1h5.500" stroke="#333" stroke-width="1.300"/><path d="M1316 760.500h14" stroke="#333" stroke-width="1"/>
<path d="M1576.500 254.500l4.200 -4.500 4.200 4.500z" fill="#a3a3a3" stroke="none"/><path d="M1576.500 1063l4.200 4.500 4.200 -4.500z" fill="#8a8a8a" stroke="none"/>
</svg>
<div class="a" style="left:1224px;top:1075.500px;width:364px;height:62px;background:#f4f4f4"></div>
<div class="a" style="left:1237px;top:1084.500px;width:64.500px;height:43.500px;border:1px solid #555;border-radius:3px;background:#fff"></div>
<div class="t" style="left:1314px;top:1100.500px;font-size:12px;color:#444;letter-spacing:.1px">Blank Canvas</div>
<div class="t al dis" style="left:1207.7px;width:100px;text-align:center;top:1175.500px">Slice</div>
<div class="t al " style="left:1268.3px;width:100px;text-align:center;top:1175.500px">Combine</div>
<div class="t al " style="left:1333.0px;width:100px;text-align:center;top:1175.500px">Attach</div>
<div class="t al " style="left:1391.0px;width:100px;text-align:center;top:1175.500px">Flatten</div>
<div class="t al dis" style="left:1453.7px;width:100px;text-align:center;top:1175.500px">Contour</div>
<svg style="left:0;top:0" width="1588" height="1258" viewBox="0 0 1588 1258" fill="none" stroke-linecap="round" stroke-linejoin="round">
<g stroke="#cfcfcf" stroke-width="1.700"><path d="M1251.500 1159.200a7.800 7.800 0 1 1 10.800 -9.600"/><path d="M1255 1152.500h13.500v13h-13.500zM1255 1152.500l8.500 4.300-8.500 5.200"/></g>
<g stroke="#111" stroke-width="1.900"><rect x="1301" y="1145.500" width="13.500" height="13.500" rx="1"/><circle cx="1314" cy="1157.500" r="7.700"/></g><path d="M1330 1153h8.500l-4.250 5z" fill="#111" stroke="none"/>
<g stroke="#111" stroke-width="2.100"><path d="M1389.500 1150.500h-12.500c-3 0-5.200 2-5.200 4.700s2.200 4.700 5.200 4.700h11.500c1.700 0 3-1 3-2.500s-1.300-2.500-3-2.500h-10"/><path d="M1377 1159.900h11.500c3.300 0 5.700-2 5.700-4.700s-2.400-4.700-5.700-4.700"/></g>
<g stroke="#111" stroke-width="1.900"><path d="M1441 1144v10M1436.500 1150.500l4.500 4.300 4.500-4.300M1433.500 1153l-3 2 10.500 6 10.500-6-3-2M1430.500 1159.700l10.500 6 10.500-6"/></g>
<circle cx="1503.500" cy="1155" r="11.300" stroke="#cfcfcf" stroke-width="1.700" stroke-dasharray="5.500 3.400"/>
</svg>
<div class="a" style="left:1224.500px;top:1197px;width:363.500px;height:61px;background:#0f4bc5"></div>
<svg style="left:0;top:0" width="1588" height="1258" viewBox="0 0 1588 1258"><path d="M1244.300 1214h38.700l-7.500 26.200h-25.300l-.7 5.800-4.700-5.800h-.5z" fill="#1aa873"/></svg>
<div class="t" style="left:1254.300px;top:1215.300px;font-size:22px;color:#e8fff6">a</div>
<div class="t" style="left:1293.300px;top:1220.600px;font-size:18px;letter-spacing:.08px;color:#fff;-webkit-text-stroke:.25px #fff">Try Cricut Access for free</div>
</div>
</body></html>
